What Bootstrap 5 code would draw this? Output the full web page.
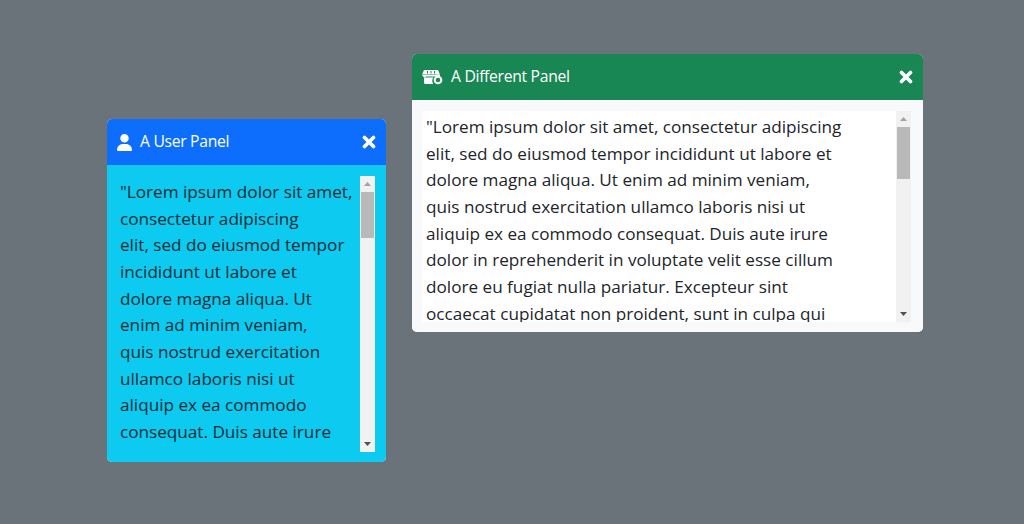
<!DOCTYPE html>
<html lang="en">
<head>
    <meta charset="UTF-8">
    <meta name="viewport" content="width=device-width, initial-scale=1.0">
    <link href="https://cdn.jsdelivr.net/npm/bootstrap@5.3.3/dist/css/bootstrap.min.css" rel="stylesheet">
    <script src="https://cdn.jsdelivr.net/npm/bootstrap@5.3.3/dist/js/bootstrap.bundle.min.js"></script>
    <title>Panels</title>
    <style>
        html, body{
            height: 100%;
            overflow: hidden;
        }
        body{
            background-color: #6a727a;
            font-family: "Open Sans", "Noto Sans", sans-serif;
            position: relative;
        }
        .panelWin{
            position: absolute;
            border: 0;
            border-radius: 5px;
            overflow: hidden;
        }
        .userPanel{
            left: 107px;
            top: 119px;
            width: 279px;
            height: 343px;
        }
        .otherPanel{
            left: 412px;
            top: 54px;
            width: 511px;
            height: 278px;
        }
        .panelHead{
            flex: 0 0 46px;
            padding: 0 10px;
            border: 0;
            border-radius: 0 !important;
            font-size: 15.7px;
            color: #fff;
        }
        .panelTitle{
            letter-spacing: -.3px;
        }
        .panelBody{
            padding: 11px 11px 10px 10px;
            min-height: 0;
        }
        .otherPanel .panelBody{
            padding-right: 12px;
        }
        .scrollWrap{
            height: 100%;
        }
        .scrollText{
            flex: 1 1 0;
            min-width: 0;
            overflow: hidden;
            font-size: 17.15px;
            line-height: 26.65px;
            padding: 3px 6px 0 3px;
        }
        .otherPanel .scrollWrap{
            background-color: #fff;
            color: #212529;
        }
        .otherPanel .scrollText{
            padding-left: 4px;
        }
        .userPanel .scrollText{
            color: #052c33;
        }
        .scrollText p{
            margin: 0;
        }
        .fakeBar{
            flex: 0 0 15px;
            background-color: #f1f1f1;
        }
        .barBtn{
            flex: 0 0 16px;
        }
        .barThumb{
            margin: 0 1px;
            background-color: #b9b9b9;
        }
        .userPanel .barThumb{
            height: 46px;
        }
        .otherPanel .barThumb{
            height: 52px;
        }
    </style>
</head>
<body>
    <div class="card panelWin userPanel">
        <div class="card-header panelHead text-bg-primary d-flex align-items-center">
            <svg class="me-2" width="15" height="17" viewBox="0 0 448 512" fill="#fff"><path d="M224 256a128 128 0 1 0 0-256 128 128 0 1 0 0 256zm-45.700 48C79.800 304 0 383.800 0 482.300 0 498.700 13.300 512 29.700 512h388.600c16.400 0 29.700-13.300 29.700-29.700C448 383.800 368.200 304 269.700 304h-91.400z"/></svg>
            <span class="panelTitle flex-grow-1">A User Panel</span>
            <svg width="14" height="14" viewBox="0 0 14 14" stroke="#fff" stroke-width="3.600" stroke-linecap="round"><path d="M2.500 2.500l9 9M11.500 2.500l-9 9"/></svg>
        </div>
        <div class="card-body panelBody text-bg-info">
            <div class="scrollWrap d-flex">
                <div class="scrollText"><p>"Lorem ipsum dolor sit amet, consectetur adipiscing<br>elit, sed do eiusmod tempor incididunt ut labore et<br>dolore magna aliqua. Ut enim ad minim veniam,<br>quis nostrud exercitation ullamco laboris nisi ut<br>aliquip ex ea commodo consequat. Duis aute irure</p></div>
                <div class="fakeBar d-flex flex-column">
                    <svg class="barBtn" width="15" height="16" viewBox="0 0 15 16"><path fill="#a3a3a3" d="M4 10l3.500-4 3.500 4z"/></svg>
                    <div class="barThumb"></div>
                    <div class="flex-grow-1"></div>
                    <svg class="barBtn" width="15" height="16" viewBox="0 0 15 16"><path fill="#505050" d="M4 6l3.500 4 3.500-4z"/></svg>
                </div>
            </div>
        </div>
    </div>
    <div class="card panelWin otherPanel">
        <div class="card-header panelHead text-bg-success d-flex align-items-center">
            <svg width="21" height="15" viewBox="0 0 21 15">
                <path fill="#fff" d="M2 0h14l2 4.500H0z"/>
                <path fill="#198754" d="M5 1h1v2.500H5zM8.500 1h1v2.500h-1zM12 1h1v2.500h-1z"/>
                <path fill="#fff" d="M0 5h18a1.500 1.500 0 0 1-1 1.500h-1a2 2 0 0 1-1 0H4a2 2 0 0 1-3 0z"/>
                <path fill="#fff" d="M2 7.500h9.500a5.500 5.500 0 0 0-.2 6.500H3.500a1.500 1.500 0 0 1-1.500-1.500z"/>
                <circle cx="16" cy="10" r="3.300" fill="none" stroke="#fff" stroke-width="2.100"/>
                <path fill="#fff" d="M14.500 4.500h3.500v3h-3.500z"/>
            </svg>
            <span class="panelTitle flex-grow-1 ms-2">A Different Panel</span>
            <svg width="14" height="14" viewBox="0 0 14 14" stroke="#fff" stroke-width="3.600" stroke-linecap="round"><path d="M2.500 2.500l9 9M11.500 2.500l-9 9"/></svg>
        </div>
        <div class="card-body panelBody bg-light">
            <div class="scrollWrap d-flex">
                <div class="scrollText"><p>"Lorem ipsum dolor sit amet, consectetur adipiscing<br>elit, sed do eiusmod tempor incididunt ut labore et<br>dolore magna aliqua. Ut enim ad minim veniam,<br>quis nostrud exercitation ullamco laboris nisi ut<br>aliquip ex ea commodo consequat. Duis aute irure<br>dolor in reprehenderit in voluptate velit esse cillum<br>dolore eu fugiat nulla pariatur. Excepteur sint<br>occaecat cupidatat non proident, sunt in culpa qui</p></div>
                <div class="fakeBar d-flex flex-column">
                    <svg class="barBtn" width="15" height="16" viewBox="0 0 15 16"><path fill="#a3a3a3" d="M4 10l3.500-4 3.500 4z"/></svg>
                    <div class="barThumb"></div>
                    <div class="flex-grow-1"></div>
                    <svg class="barBtn" width="15" height="16" viewBox="0 0 15 16"><path fill="#505050" d="M4 6l3.500 4 3.500-4z"/></svg>
                </div>
            </div>
        </div>
    </div>
</body>
</html>
